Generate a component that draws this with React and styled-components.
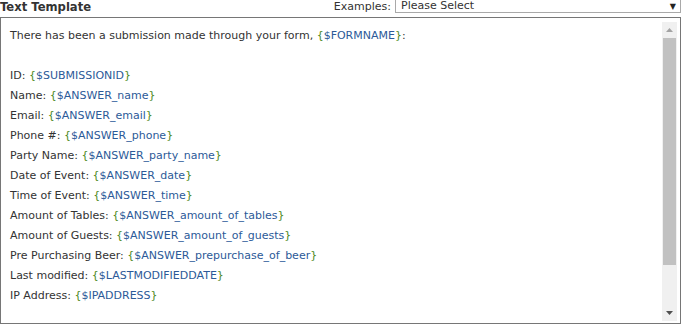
import React from 'react';
import styled, { createGlobalStyle } from 'styled-components';

const GlobalStyle = createGlobalStyle`
  html, body {
    margin: 0;
    padding: 0;
    background: #fff;
    overflow: hidden;
  }
  body {
    font-family: "DejaVu Sans", Verdana, sans-serif;
    color: #333;
  }
`;

const Page = styled.div`
  width: 681px;
  height: 325px;
  display: flex;
  flex-direction: column;
  overflow: hidden;
`;

const Header = styled.div`
  display: flex;
  align-items: flex-end;
  height: 13px;
`;

const Title = styled.div`
  flex: 1;
  font-weight: bold;
  font-size: 11.6px;
  line-height: 12px;
  color: #333;
`;

const ExamplesLabel = styled.label`
  font-size: 11px;
  line-height: 12px;
  color: #333;
  margin-right: 4px;
`;

const Select = styled.div`
  width: 286px;
  height: 13px;
  box-sizing: border-box;
  border: 1px solid #a9a9a9;
  border-top: none;
  display: flex;
  align-items: flex-end;
  justify-content: space-between;
  padding: 0 4px 0 5px;
  font-size: 11px;
  line-height: 12px;
  color: #333;
`;

const Caret = styled.span`
  font-size: 8px;
  line-height: 10px;
  color: #222;
`;

const Editor = styled.div`
  margin-top: 4px;
  height: 307px;
  box-sizing: border-box;
  border: 1px solid #767676;
  display: flex;
`;

const Content = styled.div`
  flex: 1;
  padding: 8px 9px;
  font-size: 11px;
  line-height: 20px;
  color: #333;
  overflow: hidden;
`;

const Line = styled.div`
  white-space: pre;
  min-height: 20px;
`;

const Brace = styled.span`
  color: #4e8a1e;
`;

const Token = styled.span`
  color: #2c5a98;
`;

const Scrollbar = styled.div`
  width: 15px;
  margin: 4px 3px 2px 0;
  background: #f0f0f0;
  display: flex;
  flex-direction: column;
  align-items: center;
`;

const Arrow = styled.div`
  height: 16px;
  display: flex;
  align-items: center;
  justify-content: center;
`;

const Thumb = styled.div`
  width: 13px;
  height: 227px;
  background: #c1c1c1;
`;

const Spacer = styled.div`
  flex: 1;
`;

const Var = ({ name }) => (
  <>
    <Brace>{'{'}</Brace>
    <Token>{name}</Token>
    <Brace>{'}'}</Brace>
  </>
);

const rows = [
  ['ID: ', '$SUBMISSIONID'],
  ['Name: ', '$ANSWER_name'],
  ['Email: ', '$ANSWER_email'],
  ['Phone #: ', '$ANSWER_phone'],
  ['Party Name: ', '$ANSWER_party_name'],
  ['Date of Event: ', '$ANSWER_date'],
  ['Time of Event: ', '$ANSWER_time'],
  ['Amount of Tables: ', '$ANSWER_amount_of_tables'],
  ['Amount of Guests: ', '$ANSWER_amount_of_guests'],
  ['Pre Purchasing Beer: ', '$ANSWER_prepurchase_of_beer'],
  ['Last modified: ', '$LASTMODIFIEDDATE'],
  ['IP Address: ', '$IPADDRESS'],
];

export default function App() {
  return (
    <Page>
      <GlobalStyle />
      <Header>
        <Title>Text Template</Title>
        <ExamplesLabel>Examples:</ExamplesLabel>
        <Select>
          <span>Please Select</span>
          <Caret>▼</Caret>
        </Select>
      </Header>
      <Editor>
        <Content>
          <Line>
            There has been a submission made through your form, <Var name="$FORMNAME" />:
          </Line>
          <Line />
          {rows.map(([label, name]) => (
            <Line key={name}>
              {label}
              <Var name={name} />
            </Line>
          ))}
        </Content>
        <Scrollbar>
          <Arrow>
            <svg width="7" height="4" viewBox="0 0 7 4">
              <path d="M0 4 L3.5 0 L7 4 Z" fill="#a3a3a3" />
            </svg>
          </Arrow>
          <Thumb />
          <Spacer />
          <Arrow>
            <svg width="7" height="4" viewBox="0 0 7 4">
              <path d="M0 0 L3.5 4 L7 0 Z" fill="#505050" />
            </svg>
          </Arrow>
        </Scrollbar>
      </Editor>
    </Page>
  );
}
